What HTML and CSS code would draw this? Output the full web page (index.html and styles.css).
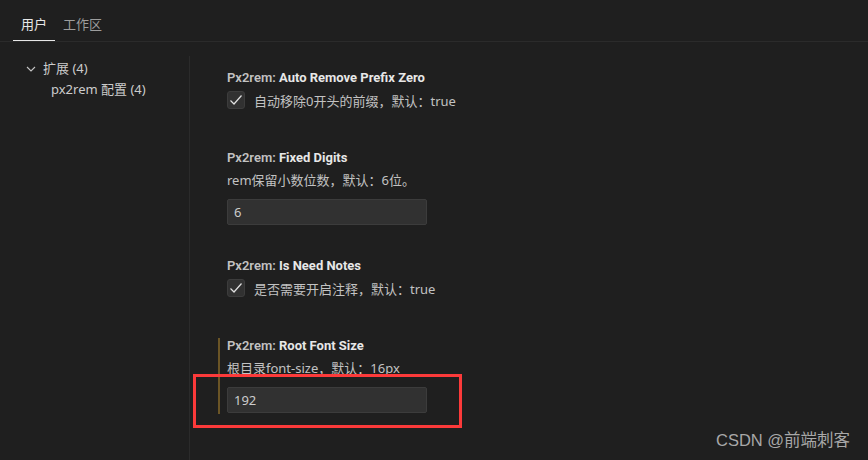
FILE: index.html
```html
<!DOCTYPE html>
<html>
<head>
<title>设置</title>
<link rel="stylesheet" href="styles.css">
</head>
<body>

<div class="tabs">
<div class="tab active">用户</div>
<div class="tab">工作区</div>
</div>

<div class="main">

<div class="tree">
<div class="row">
<svg class="chev" width="10" height="10" viewBox="0 0 10 10"><polyline points="1,3 5,7 9,3" fill="none" stroke="#c5c5c5" stroke-width="1.1"/></svg>
<span>扩展 (4)</span>
</div>
<div class="row sub">px2rem 配置 (4)</div>
</div>

<div class="settings">

<div class="setting check-item">
<div class="title"><span class="cat">Px2rem: </span>Auto Remove Prefix Zero</div>
<div class="check-row">
<span class="checkbox"><svg width="18" height="18" viewBox="0 0 18 18"><polyline points="3.5,9.5 7,13 14.5,4.5" fill="none" stroke="#e0e0e0" stroke-width="1.2"/></svg></span>
<span class="desc">自动移除0开头的前缀，默认：true</span>
</div>
</div>

<div class="setting input-item">
<div class="title"><span class="cat">Px2rem: </span>Fixed Digits</div>
<div class="desc line">rem保留小数位数，默认：6位。</div>
<div class="input">6</div>
</div>

<div class="setting check-item">
<div class="title"><span class="cat">Px2rem: </span>Is Need Notes</div>
<div class="check-row">
<span class="checkbox"><svg width="18" height="18" viewBox="0 0 18 18"><polyline points="3.5,9.5 7,13 14.5,4.5" fill="none" stroke="#e0e0e0" stroke-width="1.2"/></svg></span>
<span class="desc">是否需要开启注释，默认：true</span>
</div>
</div>

<div class="setting input-item modified">
<div class="title"><span class="cat">Px2rem: </span>Root Font Size</div>
<div class="desc line">根目录font-size，默认：16px</div>
<div class="input">192</div>
</div>

</div>
</div>

<div class="mark"></div>
<div class="watermark">CSDN @前端刺客</div>

</body>
</html>
```

FILE: styles.css
```css
body{
margin:0;
background:#1f1f1f;
color:#cccccc;
font-family:"Noto Sans","Noto Sans CJK SC",sans-serif;
font-size:13px;
height:460px;
overflow:hidden;
}

.tabs{
display:flex;
height:41px;
padding-left:13px;
border-bottom:1px solid #2b2b2b;
}

.tab{
padding:0 8px;
line-height:48px;
height:41px;
color:#9d9d9d;
box-sizing:border-box;
}

.tab.active{
color:#e7e7e7;
border-bottom:1px solid #e7e7e7;
}

.main{
display:flex;
padding-top:14px;
height:404px;
}

.tree{
width:189px;
border-right:1px solid #2b2b2b;
padding-top:2px;
}

.row{
height:21px;
line-height:21px;
display:flex;
align-items:center;
padding-left:26px;
}

.chev{
margin-right:7px;
}

.row.sub{
padding-left:51px;
}

.settings{
padding-left:28px;
padding-top:14px;
}

.setting{
border-left:2px solid transparent;
padding-left:7px;
}

.setting.modified{
border-color:#6b5526;
}

.title{
padding-top:1px;
line-height:14px;
font-family:Roboto,"Noto Sans CJK SC",sans-serif;
font-weight:bold;
color:#e7e7e7;
}

.cat{
color:#c2c2c2;
font-weight:600;
}

.check-item{
margin-bottom:41px;
}

.input-item{
margin-bottom:32px;
padding-bottom:1px;
}

.check-row{
display:flex;
align-items:center;
margin-top:6px;
height:18px;
}

.checkbox{
width:18px;
height:18px;
box-sizing:border-box;
background:#313131;
border:1px solid #3c3c3c;
border-radius:3px;
margin-right:9px;
display:flex;
}

.checkbox svg{
margin:-1px;
}

.desc{
color:#c2c2c2;
}

.line{
line-height:18px;
margin-top:6px;
}

.input{
margin-top:10px;
width:200px;
height:26px;
box-sizing:border-box;
background:#313131;
border:1px solid #3c3c3c;
border-radius:2px;
padding-left:6px;
line-height:24px;
color:#cccccc;
}

.mark{
position:absolute;
left:193px;
top:374px;
width:269px;
height:54px;
box-sizing:border-box;
border:3px solid #fc3a3a;
}

.watermark{
position:absolute;
left:716px;
top:429px;
font-family:"Liberation Sans","Noto Sans CJK SC",sans-serif;
font-size:16.5px;
line-height:22px;
color:#a8a8a8;
}
```
